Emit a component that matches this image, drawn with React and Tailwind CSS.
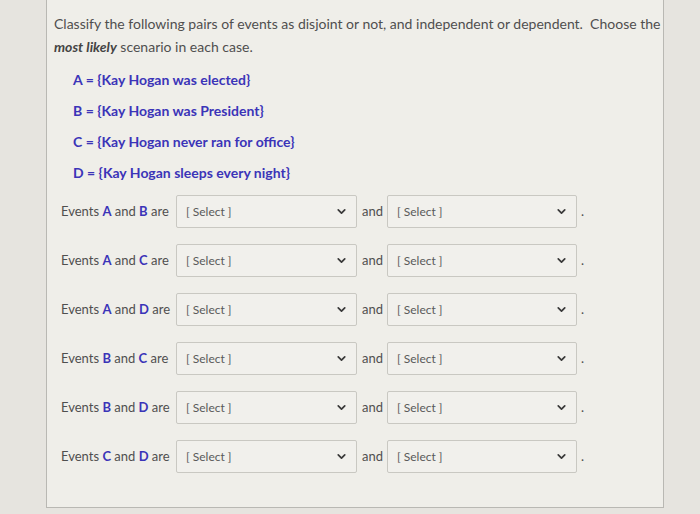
import { ChevronDown } from "lucide-react";

const defs = [
  ["A", "Kay Hogan was elected"],
  ["B", "Kay Hogan was President"],
  ["C", "Kay Hogan never ran for office"],
  ["D", "Kay Hogan sleeps every night"],
];

const pairs = [
  ["A", "B"],
  ["A", "C"],
  ["A", "D"],
  ["B", "C"],
  ["B", "D"],
  ["C", "D"],
];

function Select({ width }) {
  return (
    <div
      className={`flex items-center justify-between h-[33px] border border-[#c9c8c2] rounded-[2px] bg-[#f1f0ec] pl-[9px] pr-[8px] ${width}`}
    >
      <span className="text-[12px] text-[#5a5a5a]">[ Select ]</span>
      <ChevronDown size={13} strokeWidth={3.2} className="text-[#3a3a3a]" />
    </div>
  );
}

export default function App() {
  return (
    <div className="w-[700px] h-[514px] bg-[#e6e4df] overflow-hidden font-['Lato','Open_Sans',sans-serif]">
      <div className="ml-[46px] w-[618px] h-[508px] bg-[#efeee9] border-l border-r border-b border-[#b9b8b3] pl-[7px] pt-[12px] text-[#4f4f4f]">
        <p className="text-[14px] leading-[23px] whitespace-nowrap">
          Classify the following pairs of events as disjoint or not, and independent or dependent.&nbsp; Choose the
        </p>
        <p className="text-[14px] leading-[23px]">
          <b className="font-bold italic text-[#444]">most likely</b> scenario in each case.
        </p>

        <div className="mt-[6px] ml-[19px] flex flex-col">
          {defs.map(([k, v]) => (
            <p key={k} className="text-[14px] leading-[31px] font-bold text-[#3b34b8]">
              {k} = {"{"}
              {v}
              {"}"}
            </p>
          ))}
        </div>

        <div className="mt-[7px] ml-[7px] flex flex-col gap-[16px]">
          {pairs.map(([a, b]) => (
            <div key={a + b} className="flex items-center">
              <span className="text-[13px] w-[115px] whitespace-nowrap">
                Events <b className="text-[#3b34b8]">{a}</b> and <b className="text-[#3b34b8]">{b}</b> are
              </span>
              <Select width="w-[181px]" />
              <span className="text-[13px] ml-[5px] mr-[4px]">and</span>
              <Select width="w-[190px]" />
              <span className="text-[13px] ml-[4px]">.</span>
            </div>
          ))}
        </div>
      </div>
    </div>
  );
}
